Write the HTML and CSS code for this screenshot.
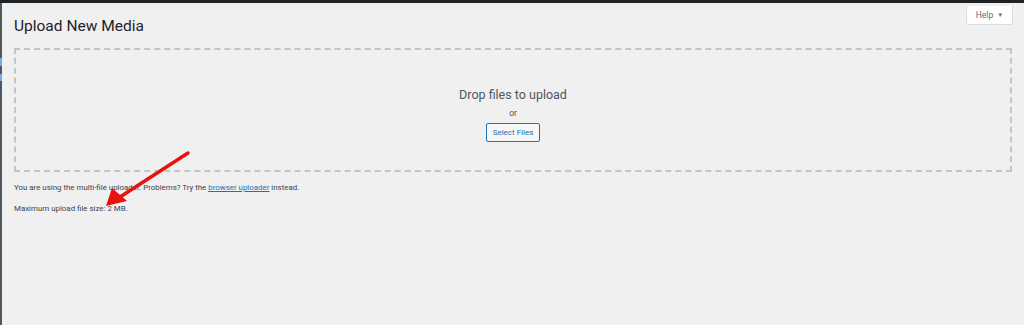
FILE: index.html
```html
<!DOCTYPE html>
<html>
<head>
<meta charset="utf-8">
<link rel="stylesheet" href="styles.css">
</head>
<body>
<div class="topbar"></div>
<div class="layout">
  <div class="sidemenu">
    <span class="mark mark-a"></span>
    <span class="mark mark-b"></span>
  </div>
  <main class="content">
    <div class="help-wrap"><button class="help">Help <span class="caret">▼</span></button></div>
    <h1 class="title">Upload New Media</h1>
    <div class="dropzone">
      <div class="drop-title">Drop files to upload</div>
      <div class="drop-or">or</div>
      <button class="select-btn">Select Files</button>
    </div>
    <p class="note">You are using the multi-file uploader. Problems? Try the <a href="#">browser uploader</a> instead.</p>
    <p class="note">Maximum upload file size: 2 MB.</p>
  </main>
</div>
<svg class="arrow" width="1024" height="325" viewBox="0 0 1024 325">
  <line x1="188" y1="153" x2="120" y2="197" stroke="#e8130f" stroke-width="3.5" stroke-linecap="round"/>
  <polygon points="106,206 112,188 127,201" fill="#e8130f"/>
</svg>
</body>
</html>
```
FILE: styles.css
```css
html, body {
  margin: 0;
  padding: 0;
  height: 100%;
}
body {
  background: #f0f0f1;
  font-family: Roboto, "Noto Sans", sans-serif;
  color: #3c434a;
  overflow: hidden;
  position: relative;
}
.topbar {
  height: 3px;
  background: #1d2327;
}
.layout {
  display: flex;
  height: 322px;
}
.sidemenu {
  width: 2px;
  background: #50575e;
  position: relative;
  flex: none;
}
.mark {
  position: absolute;
  left: 0;
  width: 2px;
  background: #72aee6;
}
.mark-a { top: 55px; height: 8px; }
.mark-b { top: 71px; height: 7px; }
.content {
  flex: 1;
  padding: 0 12px 0 12px;
  position: relative;
}
.help-wrap {
  position: absolute;
  right: 11px;
  top: 0;
}
.help {
  font-family: Roboto, sans-serif;
  font-size: 8.5px;
  color: #646970;
  background: #fff;
  border: 1px solid #dcdcde;
  border-top: none;
  border-radius: 0 0 3px 3px;
  width: 47px;
  height: 19px;
  padding: 0;
}
.caret {
  font-size: 6px;
  margin-left: 2px;
  position: relative;
  top: -1px;
}
.title {
  margin: 0;
  padding-top: 13px;
  font-size: 15.5px;
  font-weight: 400;
  color: #1d2327;
  line-height: 20px;
}
.dropzone {
  margin-top: 12px;
  height: 124px;
  border: 2px dashed #c3c4c7;
  box-sizing: border-box;
  display: flex;
  flex-direction: column;
  align-items: center;
  padding-top: 37px;
}
.drop-title {
  font-size: 12.5px;
  color: #50575e;
  line-height: 16px;
}
.drop-or {
  font-size: 8.5px;
  color: #50575e;
  margin-top: 5px;
  line-height: 11px;
}
.select-btn {
  margin-top: 4px;
  font-family: Roboto, sans-serif;
  font-size: 8px;
  color: #2271b1;
  background: #f6f7f7;
  border: 1px solid #2271b1;
  border-radius: 2px;
  width: 54px;
  height: 19px;
  padding: 0;
}
.note {
  margin: 0;
  font-size: 7.9px;
  line-height: 11px;
  color: #3c434a;
}
.note:first-of-type { margin-top: 10px; }
.note + .note { margin-top: 10px; }
.note a { color: #2271b1; }
.arrow {
  position: absolute;
  left: 0;
  top: 0;
  pointer-events: none;
}
```
